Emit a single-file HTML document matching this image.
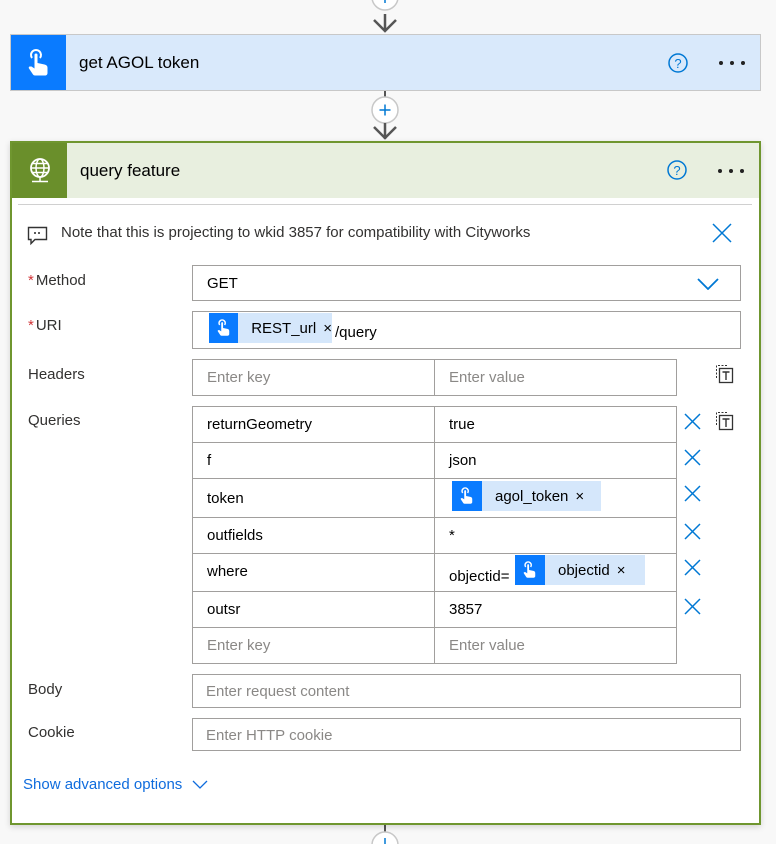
<!DOCTYPE html>
<html><head><meta charset="utf-8"><style>
*{box-sizing:border-box;margin:0;padding:0}
body{width:776px;height:844px;background:#f8f8f8;font-family:"Liberation Sans",sans-serif;font-size:15px;color:#000;position:relative;overflow:hidden}
.a{position:absolute}
.box{position:absolute;border:1px solid #a19f9d;background:#fff}
.lbl{position:absolute;left:28px;color:#323130;font-size:15px}
.req{color:#d13438;margin-right:2px}
.ph{color:#8a8886}
.cell{position:absolute;border:1px solid #a19f9d;background:#fff;padding-left:14px;display:flex;align-items:center;font-size:15px}
.chip{position:absolute;height:30px;background:#d5e7fb;display:flex;align-items:center;font-size:15px}
.chip .ic{width:30px;height:30px;background:#0a7bff;display:flex;align-items:center;justify-content:center;margin-right:13px}
</style></head><body>
<svg class="a" style="left:0;top:0" width="776" height="844">
 <circle cx="385" cy="-3" r="13" fill="#fff" stroke="#c8c8c8" stroke-width="1.5"/>
 <path d="M385 -8V3M379.5 -3H390.5" stroke="#0078d4" stroke-width="1.5"/>
 <path d="M385 14V30M374 20L385 31L396 20" stroke="#555" stroke-width="2.5" fill="none"/>
 <path d="M385 91V97" stroke="#555" stroke-width="2"/>
 <circle cx="385" cy="110" r="13" fill="#fff" stroke="#c8c8c8" stroke-width="1.5"/>
 <path d="M385 104.5V115.5M379.5 110H390.5" stroke="#0078d4" stroke-width="1.5"/>
 <path d="M385 123V139M374 127L385 138L396 127" stroke="#555" stroke-width="2.5" fill="none"/>
 <path d="M385 825V832" stroke="#555" stroke-width="2"/>
 <circle cx="385" cy="845" r="13" fill="#fff" stroke="#c8c8c8" stroke-width="1.5"/>
 <path d="M385 838V850M379.5 845H390.5" stroke="#0078d4" stroke-width="1.5"/>
</svg>

<div class="a" style="left:10px;top:34px;width:751px;height:57px;border:1px solid #c8c8c8;background:#d9e9fb"></div>
<div class="a" style="left:11px;top:35px;width:55px;height:55px;background:#0a7bff;display:flex;align-items:center;justify-content:center">
<svg width="26" height="30" viewBox="0 0 26 30"><path d="M6 10a5 5 0 1 1 8 0" stroke="#fff" stroke-width="2" fill="none"/><path d="M8.5 7a1.5 1.5 0 0 1 3 0v8l7 1.5c2 .5 3 1.5 3 3.5v5c0 1.5-1 2.5-2.5 2.5H9c-1 0-1.5-.5-2-1l-4-6c-.6-1 0-2 1-2h1.5l3 2z" fill="#fff"/></svg></div>
<div class="a" style="left:79px;top:53px;font-size:17px;color:#000">get AGOL token</div>
<svg class="a" style="left:667px;top:52px" width="22" height="22"><circle cx="11" cy="11" r="9" fill="none" stroke="#0078d4" stroke-width="1.5"/><text x="11" y="16" text-anchor="middle" font-size="13" fill="#0078d4" font-family="Liberation Sans">?</text></svg>
<svg class="a" style="left:718px;top:58px" width="30" height="10"><circle cx="3" cy="5" r="2" fill="#222"/><circle cx="14" cy="5" r="2" fill="#222"/><circle cx="25" cy="5" r="2" fill="#222"/></svg>

<div class="a" style="left:10px;top:141px;width:751px;height:684px;border:2px solid #6f962f;background:#fff;box-shadow:0 2px 6px rgba(0,0,0,.15)"></div>
<div class="a" style="left:12px;top:143px;width:747px;height:55px;background:#e8efdf"></div>
<div class="a" style="left:12px;top:143px;width:55px;height:55px;background:#6a8f2b;display:flex;align-items:center;justify-content:center">
<svg width="26" height="30" viewBox="0 0 26 30"><circle cx="13" cy="12" r="9" fill="none" stroke="#fff" stroke-width="1.8"/><ellipse cx="13" cy="12" rx="4" ry="9" fill="none" stroke="#fff" stroke-width="1.5"/><path d="M4 12h18M5.5 7.5h15M5.5 16.5h15M13 21v4M5 25.5h16" stroke="#fff" stroke-width="1.5"/></svg></div>
<div class="a" style="left:80px;top:161px;font-size:17px">query feature</div>
<svg class="a" style="left:666px;top:159px" width="22" height="22"><circle cx="11" cy="11" r="9" fill="none" stroke="#0078d4" stroke-width="1.5"/><text x="11" y="16" text-anchor="middle" font-size="13" fill="#0078d4" font-family="Liberation Sans">?</text></svg>
<svg class="a" style="left:717px;top:166px" width="30" height="10"><circle cx="3" cy="5" r="2" fill="#222"/><circle cx="14" cy="5" r="2" fill="#222"/><circle cx="25" cy="5" r="2" fill="#222"/></svg>
<div class="a" style="left:18px;top:204px;width:734px;height:1px;background:#d0d0d0"></div>

<svg class="a" style="left:27px;top:226px" width="22" height="20"><path d="M1.5 1.5h18v12H8l-4 4v-4H1.5z" fill="none" stroke="#333" stroke-width="1.4"/><path d="M8 6v2M12 6v2" stroke="#333" stroke-width="1.6"/></svg>
<div class="a" style="left:61px;top:224px;color:#323130">Note that this is projecting to wkid 3857 for compatibility with Cityworks</div>
<svg class="a" style="left:712px;top:223px" width="20" height="20"><path d="M1 1L19 19M19 1L1 19" stroke="#0078d4" stroke-width="1.5"/></svg>

<div class="lbl" style="top:272px"><span class="req">*</span>Method</div>
<div class="box" style="left:192px;top:265px;width:549px;height:36px;padding:9px 14px">GET</div>
<svg class="a" style="left:697px;top:278px" width="22" height="12"><path d="M1 1L11 11L21 1" stroke="#0078d4" stroke-width="1.8" fill="none"/></svg>

<div class="lbl" style="top:317px"><span class="req">*</span>URI</div>
<div class="box" style="left:192px;top:311px;width:549px;height:38px"></div>
<div class="chip" style="left:209px;top:313px;width:123px"><div class="ic"><svg width="16" height="20" viewBox="0 0 26 30"><path d="M6 10a5 5 0 1 1 8 0" stroke="#fff" stroke-width="2.5" fill="none"/><path d="M8.5 7a1.5 1.5 0 0 1 3 0v8l7 1.5c2 .5 3 1.5 3 3.5v5c0 1.5-1 2.5-2.5 2.5H9c-1 0-1.5-.5-2-1l-4-6c-.6-1 0-2 1-2h1.5l3 2z" fill="#fff"/></svg></div>REST_url<span style="margin-left:7px">×</span></div>
<div class="a" style="left:335px;top:324px">/query</div>

<div class="lbl" style="top:366px">Headers</div>
<div class="cell ph" style="left:192px;top:359px;width:243px;height:37px">Enter key</div>
<div class="cell ph" style="left:434px;top:359px;width:243px;height:37px">Enter value</div>
<svg class="a" style="left:715px;top:364px" width="20" height="20"><path d="M1.5 14V1.5H12" stroke="#333" stroke-dasharray="2 1.5" fill="none"/><rect x="4.5" y="4.5" width="13" height="14" fill="#fff" stroke="#333" stroke-width="1.3"/><path d="M7.5 8h7M11 8v8" stroke="#333" stroke-width="1.4"/></svg>

<div class="lbl" style="top:412px">Queries</div>
<div class="cell" style="left:192px;top:406px;width:243px;height:37px">returnGeometry</div>
<div class="cell" style="left:434px;top:406px;width:243px;height:37px">true</div>
<div class="cell" style="left:192px;top:442px;width:243px;height:37px">f</div>
<div class="cell" style="left:434px;top:442px;width:243px;height:37px">json</div>
<div class="cell" style="left:192px;top:478px;width:243px;height:40px">token</div>
<div class="cell" style="left:434px;top:478px;width:243px;height:40px"></div>
<div class="cell" style="left:192px;top:517px;width:243px;height:37px">outfields</div>
<div class="cell" style="left:434px;top:517px;width:243px;height:37px;align-items:flex-start;padding-top:9px">*</div>
<div class="cell" style="left:192px;top:553px;width:243px;height:39px;align-items:flex-start;padding-top:9px">where</div>
<div class="cell" style="left:434px;top:553px;width:243px;height:39px;align-items:flex-end;padding-bottom:6px">objectid=</div>
<div class="cell" style="left:192px;top:591px;width:243px;height:37px">outsr</div>
<div class="cell" style="left:434px;top:591px;width:243px;height:37px">3857</div>
<div class="cell ph" style="left:192px;top:627px;width:243px;height:37px">Enter key</div>
<div class="cell ph" style="left:434px;top:627px;width:243px;height:37px">Enter value</div>
<div class="chip" style="left:452px;top:481px;width:149px"><div class="ic"><svg width="16" height="20" viewBox="0 0 26 30"><path d="M6 10a5 5 0 1 1 8 0" stroke="#fff" stroke-width="2.5" fill="none"/><path d="M8.5 7a1.5 1.5 0 0 1 3 0v8l7 1.5c2 .5 3 1.5 3 3.5v5c0 1.5-1 2.5-2.5 2.5H9c-1 0-1.5-.5-2-1l-4-6c-.6-1 0-2 1-2h1.5l3 2z" fill="#fff"/></svg></div>agol_token<span style="margin-left:7px">×</span></div>
<div class="chip" style="left:515px;top:555px;width:130px"><div class="ic"><svg width="16" height="20" viewBox="0 0 26 30"><path d="M6 10a5 5 0 1 1 8 0" stroke="#fff" stroke-width="2.5" fill="none"/><path d="M8.5 7a1.5 1.5 0 0 1 3 0v8l7 1.5c2 .5 3 1.5 3 3.5v5c0 1.5-1 2.5-2.5 2.5H9c-1 0-1.5-.5-2-1l-4-6c-.6-1 0-2 1-2h1.5l3 2z" fill="#fff"/></svg></div>objectid<span style="margin-left:7px">×</span></div>
<svg class="a" style="left:715px;top:411px" width="20" height="20"><path d="M1.5 14V1.5H12" stroke="#333" stroke-dasharray="2 1.5" fill="none"/><rect x="4.5" y="4.5" width="13" height="14" fill="#fff" stroke="#333" stroke-width="1.3"/><path d="M7.5 8h7M11 8v8" stroke="#333" stroke-width="1.4"/></svg>
<svg class="a" style="left:684px;top:413px" width="17" height="17"><path d="M1 1L16 16M16 1L1 16" stroke="#0078d4" stroke-width="1.5"/></svg>
<svg class="a" style="left:684px;top:449px" width="17" height="17"><path d="M1 1L16 16M16 1L1 16" stroke="#0078d4" stroke-width="1.5"/></svg>
<svg class="a" style="left:684px;top:485px" width="17" height="17"><path d="M1 1L16 16M16 1L1 16" stroke="#0078d4" stroke-width="1.5"/></svg>
<svg class="a" style="left:684px;top:523px" width="17" height="17"><path d="M1 1L16 16M16 1L1 16" stroke="#0078d4" stroke-width="1.5"/></svg>
<svg class="a" style="left:684px;top:559px" width="17" height="17"><path d="M1 1L16 16M16 1L1 16" stroke="#0078d4" stroke-width="1.5"/></svg>
<svg class="a" style="left:684px;top:598px" width="17" height="17"><path d="M1 1L16 16M16 1L1 16" stroke="#0078d4" stroke-width="1.5"/></svg>

<div class="lbl" style="top:681px">Body</div>
<div class="box ph" style="left:192px;top:674px;width:549px;height:34px;padding:8px 13px">Enter request content</div>
<div class="lbl" style="top:724px">Cookie</div>
<div class="box ph" style="left:192px;top:718px;width:549px;height:33px;padding:8px 13px">Enter HTTP cookie</div>

<div class="a" style="left:23px;top:776px;color:#0f6cdd">Show advanced options</div>
<svg class="a" style="left:192px;top:780px" width="16" height="10"><path d="M1 1L8 8L15 1" stroke="#0f6cdd" stroke-width="1.3" fill="none"/></svg>
</body></html>
